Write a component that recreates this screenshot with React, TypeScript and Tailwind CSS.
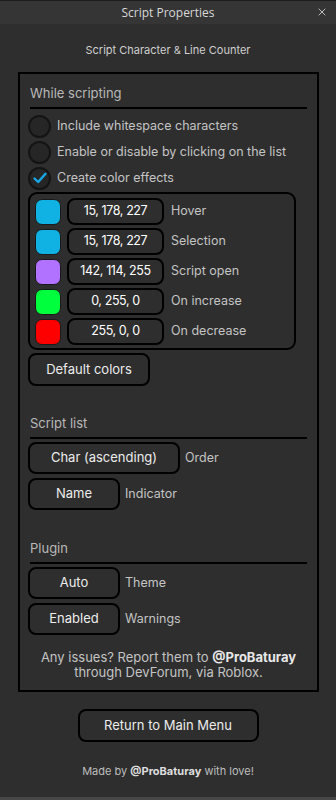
import { X } from "lucide-react";

const colors = [
  { swatch: "bg-[#0fb2e3]", value: "15, 178, 227", label: "Hover" },
  { swatch: "bg-[#0fb2e3]", value: "15, 178, 227", label: "Selection" },
  { swatch: "bg-[#b072ff]", value: "142, 114, 255", label: "Script open" },
  { swatch: "bg-[#00ff3c]", value: "0, 255, 0", label: "On increase" },
  { swatch: "bg-[#ff0000]", value: "255, 0, 0", label: "On decrease" },
];

const toggles = [
  { label: "Include whitespace characters", on: false },
  { label: "Enable or disable by clicking on the list", on: false },
  { label: "Create color effects", on: true },
];

function Header({ title }: { title: string }) {
  return (
    <div>
      <div className="h-[20px] leading-[20px] text-[13px] text-[#b9b9b9]">{title}</div>
      <div className="mt-[4px] h-[2px] bg-black" />
    </div>
  );
}

function OptionButton({ text, label, width }: { text: string; label: string; width: string }) {
  return (
    <div className="flex items-center gap-[5px]">
      <button
        className={`${width} h-[32px] rounded-[8px] border-2 border-black bg-[#2e2e2e] text-[13px] text-[#ececec]`}
      >
        {text}
      </button>
      <span className="text-[12.5px] text-[#c4c4c4]">{label}</span>
    </div>
  );
}

export default function App() {
  return (
    <div
      className="w-[336px] h-[800px] bg-[#2e2e2e] flex flex-col"
      style={{ fontFamily: "Inter, 'Noto Sans', sans-serif" }}
    >
      {/* Title bar */}
      <div className="relative h-[24px] bg-[#353535] border-t border-[#1e1e1e] flex items-center justify-center">
        <span className="text-[12px] text-[#d8d8d8]" style={{ fontFamily: "'Open Sans', sans-serif" }}>
          Script Properties
        </span>
        <X size={12} strokeWidth={1.6} className="absolute right-[8px] top-[5px] text-[#e0e0e0]" />
      </div>

      <div className="flex-1 flex flex-col items-center">
        <div className="mt-[18px] h-[16px] leading-[16px] text-[11px] text-[#cfcfcf]">
          Script Character &amp; Line Counter
        </div>

        {/* Main panel */}
        <div className="mt-[14px] self-start ml-[18px] w-[301px] h-[620px] border-2 border-black px-[10px] pt-[9px] flex flex-col">
          <Header title="While scripting" />

          <div className="mt-[4px] flex flex-col">
            {toggles.map((t) => (
              <div key={t.label} className="h-[26px] flex items-center gap-[6px] -ml-[2px]">
                <div className="w-[23px] h-[23px] rounded-full bg-[#262626] border-2 border-[#141414] flex items-center justify-center">
                  {t.on && (
                    <svg width="16" height="16" viewBox="0 0 16 16" fill="none">
                      <path
                        d="M2.5 8.5 L6.2 12 L13.5 3.8"
                        stroke="#17a8e8"
                        strokeWidth="2.4"
                        strokeLinecap="round"
                        strokeLinejoin="round"
                      />
                    </svg>
                  )}
                </div>
                <span className="text-[12.5px] text-[#c4c4c4]">{t.label}</span>
              </div>
            ))}
          </div>

          {/* Colour group */}
          <div className="mt-[1px] -ml-[2px] w-[268px] h-[158px] rounded-[9px] border-2 border-black pl-[5px] pt-[4px] flex flex-col gap-[3px]">
            {colors.map((c) => (
              <div key={c.label} className="h-[27px] flex items-center">
                <div className={`w-[26px] h-[26px] rounded-[7px] border border-[#1a1a1a] ${c.swatch}`} />
                <div className="ml-[6px] w-[97px] h-[27px] rounded-[8px] border-2 border-black flex items-center justify-center text-[12.5px] tracking-[-0.4px] text-white">
                  {c.value}
                </div>
                <span className="ml-[7px] text-[12.5px] text-[#c4c4c4]">{c.label}</span>
              </div>
            ))}
          </div>

          <button className="mt-[3px] -ml-[2px] w-[122px] h-[33px] rounded-[8px] border-2 border-black text-[13px] text-[#ececec]">
            Default colors
          </button>

          <div className="mt-[27px]">
            <Header title="Script list" />
          </div>
          <div className="mt-[3px] -ml-[2px] flex flex-col gap-[4px]">
            <OptionButton text="Char (ascending)" label="Order" width="w-[152px]" />
            <OptionButton text="Name" label="Indicator" width="w-[92px]" />
          </div>

          <div className="mt-[28px]">
            <Header title="Plugin" />
          </div>
          <div className="mt-[3px] -ml-[2px] flex flex-col gap-[4px]">
            <OptionButton text="Auto" label="Theme" width="w-[92px]" />
            <OptionButton text="Enabled" label="Warnings" width="w-[92px]" />
          </div>

          <div className="mt-[15px] text-center text-[13px] leading-[15px] text-[#c4c4c4]">
            Any issues? Report them to <span className="font-bold text-[#e8e8e8]">@ProBaturay</span>
            <br />
            through DevForum, via Roblox.
          </div>
        </div>

        <button className="mt-[17px] w-[181px] h-[33px] rounded-[8px] border-2 border-black text-[13px] text-[#ececec]">
          Return to Main Menu
        </button>

        <div className="mt-[21px] text-[11px] text-[#bdbdbd]">
          Made by <span className="font-bold text-[#dedede]">@ProBaturay</span> with love!
        </div>
      </div>
      <div className="h-[3px] bg-[#474747]" />
    </div>
  );
}
